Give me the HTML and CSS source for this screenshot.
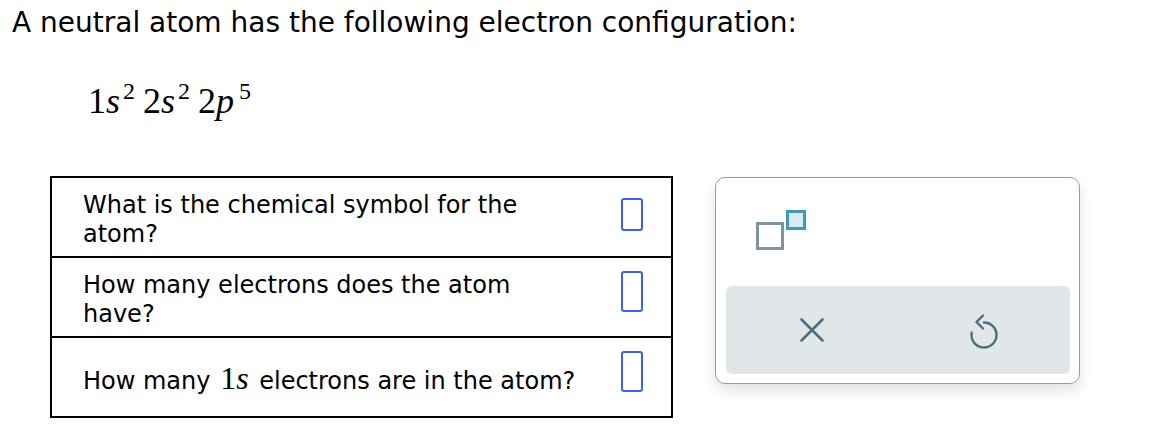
FILE: index.html
```html
<!DOCTYPE html>
<html>
<head>
<meta charset="utf-8">
<link rel="stylesheet" href="styles.css">
</head>
<body>
<p class="title">A neutral atom has the following electron configuration:</p>
<p class="config">
  <span class="term"><span class="n">1</span><i class="v">s</i><sup>2</sup></span><span class="term"><span class="n">2</span><i class="v">s</i><sup>2</sup></span><span class="term"><span class="n">2</span><i class="v">p</i><sup class="wide">5</sup></span>
</p>
<div class="content">
  <div class="qtable">
    <div class="row">
      <div class="qtext">What is the chemical symbol for the atom?</div>
      <div class="slot"><span class="box short"></span></div>
    </div>
    <div class="row r2">
      <div class="qtext">How many electrons does the atom have?</div>
      <div class="slot"><span class="box tall"></span></div>
    </div>
    <div class="row r3">
      <div class="qtext">How many <span class="math"><span class="n">1</span><i class="v">s</i></span> electrons are in the atom?</div>
      <div class="slot"><span class="box tall"></span></div>
    </div>
  </div>
  <div class="panel">
    <div class="tools">
      <div class="supicon"><span class="base"></span><span class="exp"></span></div>
    </div>
    <div class="bar">
      <button class="btn" aria-label="clear">
        <svg width="26" height="26" viewBox="0 0 26 26"><path d="M2.5 2.5 L23.5 23.5 M23.5 2.5 L2.5 23.5" stroke="#4c6e7d" stroke-width="2.6" stroke-linecap="round" fill="none"/></svg>
      </button>
      <button class="btn undo" aria-label="undo">
        <svg width="32" height="40" viewBox="0 0 32 40"><path d="M16 11.5 A12.5 12.5 0 1 1 3.7 21.8" stroke="#4c6e7d" stroke-width="2.4" stroke-linecap="round" fill="none"/><path d="M15 4.5 L8.5 11 L15 17.5" stroke="#4c6e7d" stroke-width="2.4" stroke-linecap="round" stroke-linejoin="round" fill="none"/></svg>
      </button>
    </div>
  </div>
</div>
</body>
</html>
```

FILE: styles.css
```css
html, body {
  margin: 0;
  padding: 0;
  background: #ffffff;
}
body {
  padding: 0 12px;
  font-family: "DejaVu Sans", Verdana, sans-serif;
  color: #000;
}
.title {
  margin: 6px 0 0;
  font-size: 28px;
  line-height: 33px;
}
.config {
  margin: 42px 0 0;
  padding-left: 76px;
  height: 40px;
  line-height: 40px;
  font-family: "Liberation Serif", "Times New Roman", serif;
  font-size: 36px;
  display: flex;
}
.term {
  display: inline-block;
  width: 55px;
  white-space: nowrap;
}
.config .v {
  font-style: italic;
}
.config sup {
  font-size: 24px;
  vertical-align: 14px;
  line-height: 0;
  margin-left: 3px;
}
.config sup.wide {
  margin-left: 5px;
}
.content {
  margin-top: 55px;
  display: flex;
  align-items: flex-start;
  padding-left: 38px;
}
.qtable {
  width: 619px;
  border: 2px solid #000;
}
.row {
  height: 78px;
  display: flex;
  align-items: center;
}
.r2, .r3 {
  border-top: 2px solid #000;
}
.qtext {
  flex: 0 0 500px;
  padding-left: 31px;
  padding-top: 5px;
  box-sizing: border-box;
  flex-basis: 531px;
  font-size: 24px;
  line-height: 29px;
}
.math {
  font-family: "Liberation Serif", "Times New Roman", serif;
  font-size: 32px;
  margin: 0 3px 0 2px;
}
.math .v {
  font-style: italic;
}
.slot {
  margin-left: 38px;
  display: flex;
}
.box {
  display: block;
  width: 18px;
  border: 2px solid #3d5ef5;
  border-radius: 3px;
}
.box.short {
  height: 29px;
  margin-bottom: 5px;
}
.box.tall {
  height: 37px;
  margin-bottom: 12px;
}
.panel {
  margin-left: 42px;
  margin-top: 1px;
  width: 344px;
  height: 205px;
  border: 1.5px solid #8b9faa;
  border-radius: 10px;
  box-shadow: 0 7px 14px rgba(40, 60, 80, 0.14);
  padding: 0 9.5px;
  display: flex;
  flex-direction: column;
}
.tools {
  height: 107.5px;
  box-sizing: border-box;
  padding: 32px 0 0 30px;
}
.supicon {
  display: flex;
  align-items: flex-start;
}
.supicon .base {
  margin-top: 12px;
  width: 22px;
  height: 22px;
  border: 3px solid #7d949e;
}
.supicon .exp {
  margin-left: 2px;
  width: 14px;
  height: 14px;
  border: 3px solid #4299b4;
  background: #d4edf3;
}
.bar {
  height: 88px;
  background: #e1e6e9;
  border-radius: 6px;
  display: grid;
  grid-template-columns: 1fr 1fr;
}
.btn {
  border: 0;
  background: transparent;
  padding: 0;
  display: flex;
  align-items: center;
  justify-content: center;
}
.btn svg {
  display: block;
}
.undo svg {
  margin-top: 2px;
}
```
